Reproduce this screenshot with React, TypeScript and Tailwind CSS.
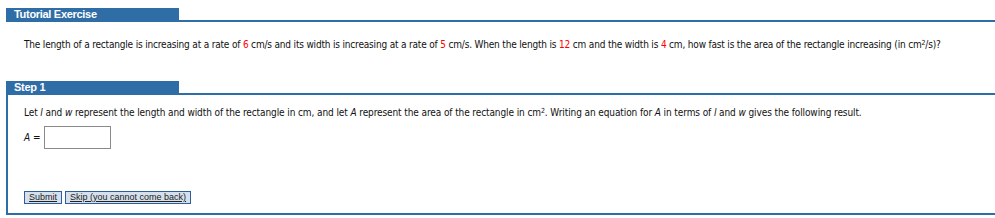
import React from "react";

const blue = "border-[#2f6da6]";

const SectionHeader = ({ title }: { title: string }) => (
  <div className={`flex border-b-2 ${blue}`}>
    <div className="w-[173px] h-[12px] bg-[#2f6da6] pl-[8px] text-white font-bold text-[11px] leading-[12px] font-['Liberation_Sans',Arial,sans-serif] tracking-[-0.3px]">
      {title}
    </div>
  </div>
);

const Red = ({ children }: { children: React.ReactNode }) => (
  <span className="text-[#ff0000]">{children}</span>
);

export default function App() {
  return (
    <div className="bg-white w-[995px] h-[218px] pl-[6px] pt-[8px] text-[10px] text-[#111] font-['DejaVu_Sans_Condensed','DejaVu_Sans',Verdana,sans-serif]">
      <SectionHeader title="Tutorial Exercise" />
      <p className="pl-[18px] pt-[16px] leading-[13px] tracking-[-0.18px] whitespace-nowrap">
        The length of a rectangle is increasing at a rate of <Red>6</Red> cm/s and its width is
        increasing at a rate of <Red>5</Red> cm/s. When the length is <Red>12</Red> cm and the
        width is <Red>4</Red> cm, how fast is the area of the rectangle increasing (in cm
        <sup className="text-[7px]">2</sup>/s)?
      </p>

      <div className="mt-[30px]">
        <SectionHeader title="Step 1" />
        <div className={`border-l-2 border-b-2 ${blue} pl-[16px] pt-[11px] pb-[9px]`}>
          <p className="leading-[13px] tracking-[-0.1px] whitespace-nowrap">
            Let <i>l</i> and <i>w</i> represent the length and width of the rectangle in cm, and
            let <i>A</i> represent the area of the rectangle in cm
            <sup className="text-[7px]">2</sup>. Writing an equation for <i>A</i> in terms of{" "}
            <i>l</i> and <i>w</i> gives the following result.
          </p>
          <div className="flex items-center mt-[7px] gap-[3px]">
            <span>
              <i>A</i> =
            </span>
            <div className="w-[67px] h-[23px] border border-[#8a8a8a] bg-white" />
          </div>
          <div className="flex gap-[3px] mt-[42px] font-['Liberation_Sans',Arial,sans-serif] text-[9px]">
            <button className="h-[13px] px-[4px] leading-[11px] bg-[#d6e0ec] border border-[#2f5f96] text-[#222] underline">
              Submit
            </button>
            <button className="h-[13px] px-[4px] leading-[11px] bg-[#d6e0ec] border border-[#2f5f96] text-[#222] underline">
              Skip (you cannot come back)
            </button>
          </div>
        </div>
      </div>
    </div>
  );
}
